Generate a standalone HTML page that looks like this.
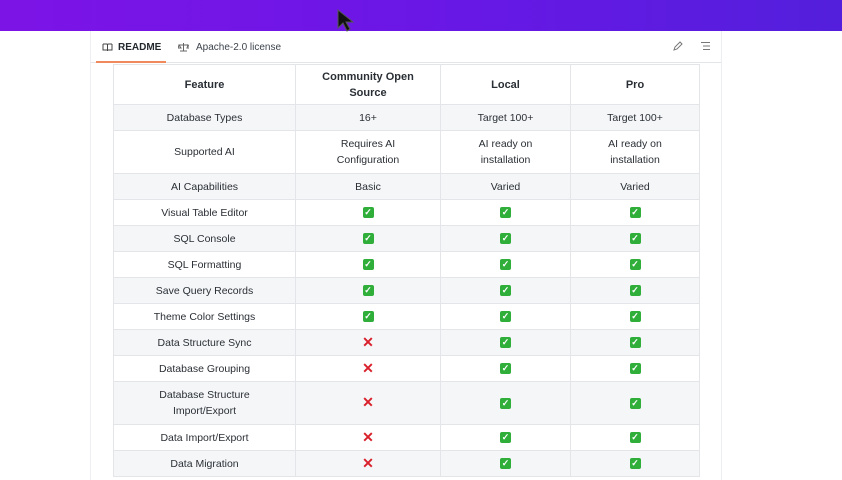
<!DOCTYPE html>
<html><head><meta charset="utf-8"><style>
*{margin:0;padding:0;box-sizing:border-box}
body{width:842px;height:480px;overflow:hidden;background:#fff;font-family:"Liberation Sans",sans-serif;color:#1f2328;position:relative}
.top{position:absolute;left:0;top:0;width:842px;height:31px;background:linear-gradient(90deg,#7d14e6,#6a17e6 50%,#531fdc)}
.card{position:absolute;left:90px;top:31px;width:632px;height:449px;border-left:1px solid #eceef1;border-right:1px solid #eceef1}
.tabs{position:absolute;left:0;top:0;width:630px;height:32px;border-bottom:1px solid #e3e5e8;font-size:10px}
.tab1{position:absolute;left:11px;top:11px;font-weight:bold;color:#24292f}
.tab2{position:absolute;left:87px;top:11px;color:#3d444d}
.uline{position:absolute;left:5px;top:30px;width:70px;height:2px;background:#f08a5d}
table{position:absolute;left:22px;top:33px;width:587px;border-collapse:collapse;font-size:10.5px;color:#2a2f35}
td,th{border:1px solid #e3e5e8;text-align:center;height:26px;line-height:16px;padding:0 4px}
th{height:40px;font-weight:bold;font-size:11px}
tr.s td{background:#f5f6f8}
tr.t td{height:43px}
.ok{display:inline-block;width:11px;height:11px;background:#2fae3a;border-radius:2px;color:#fff;font-size:9px;line-height:11px;font-weight:bold;vertical-align:middle}
.x{color:#d9212c;font-weight:bold;font-size:14px}
</style></head><body>
<div class="top"></div>
<svg style="position:absolute;left:336px;top:8px" width="22" height="26"><path d="M2 2 L2 20 L7 15 L11 23 L14 21 L10 14 L17 14 Z" fill="#111" stroke="#555" stroke-width="1"/></svg>
<div class="card">
<div class="tabs">
<svg style="position:absolute;left:11px;top:11px" width="11" height="10"><path d="M1 2h3.5c.6 0 1 .4 1 1v6M10 2H6.5c-.6 0-1 .4-1 1M1 2v6h4M10 2v6H6" stroke="#444" fill="none"/></svg>
<span class="tab1" style="left:27px">README</span>
<svg style="position:absolute;left:87px;top:11px" width="11" height="10"><path d="M5.5 1v8M2 9h7M1 3h9M1 3l-1 3h3zM10 3l-1 3h3z" stroke="#666" fill="none"/></svg>
<span class="tab2" style="left:105px">Apache-2.0 license</span>
<div class="uline"></div>
<svg style="position:absolute;left:582px;top:10px" width="10" height="10"><path d="M1 9l1-3 5-5 2 2-5 5z" stroke="#777" fill="none"/></svg>
<svg style="position:absolute;left:609px;top:10px" width="11" height="10"><path d="M1 1.5h9M3 5h7M3 8.5h7" stroke="#777"/></svg>
</div>
<table>
<tr><th style="width:182px">Feature</th><th style="width:145px">Community Open<br>Source</th><th style="width:130px">Local</th><th>Pro</th></tr>
<tr class="s"><td>Database Types</td><td>16+</td><td>Target 100+</td><td>Target 100+</td></tr>
<tr class="t"><td>Supported AI</td><td>Requires AI<br>Configuration</td><td>AI ready on<br>installation</td><td>AI ready on<br>installation</td></tr>
<tr class="s"><td>AI Capabilities</td><td>Basic</td><td>Varied</td><td>Varied</td></tr>
<tr><td>Visual Table Editor</td><td><span class="ok">✓</span></td><td><span class="ok">✓</span></td><td><span class="ok">✓</span></td></tr>
<tr class="s"><td>SQL Console</td><td><span class="ok">✓</span></td><td><span class="ok">✓</span></td><td><span class="ok">✓</span></td></tr>
<tr><td>SQL Formatting</td><td><span class="ok">✓</span></td><td><span class="ok">✓</span></td><td><span class="ok">✓</span></td></tr>
<tr class="s"><td>Save Query Records</td><td><span class="ok">✓</span></td><td><span class="ok">✓</span></td><td><span class="ok">✓</span></td></tr>
<tr><td>Theme Color Settings</td><td><span class="ok">✓</span></td><td><span class="ok">✓</span></td><td><span class="ok">✓</span></td></tr>
<tr class="s"><td>Data Structure Sync</td><td><span class="x">✕</span></td><td><span class="ok">✓</span></td><td><span class="ok">✓</span></td></tr>
<tr><td>Database Grouping</td><td><span class="x">✕</span></td><td><span class="ok">✓</span></td><td><span class="ok">✓</span></td></tr>
<tr class="s t"><td>Database Structure<br>Import/Export</td><td><span class="x">✕</span></td><td><span class="ok">✓</span></td><td><span class="ok">✓</span></td></tr>
<tr><td>Data Import/Export</td><td><span class="x">✕</span></td><td><span class="ok">✓</span></td><td><span class="ok">✓</span></td></tr>
<tr class="s"><td>Data Migration</td><td><span class="x">✕</span></td><td><span class="ok">✓</span></td><td><span class="ok">✓</span></td></tr>
</table>
</div>
</body></html>
